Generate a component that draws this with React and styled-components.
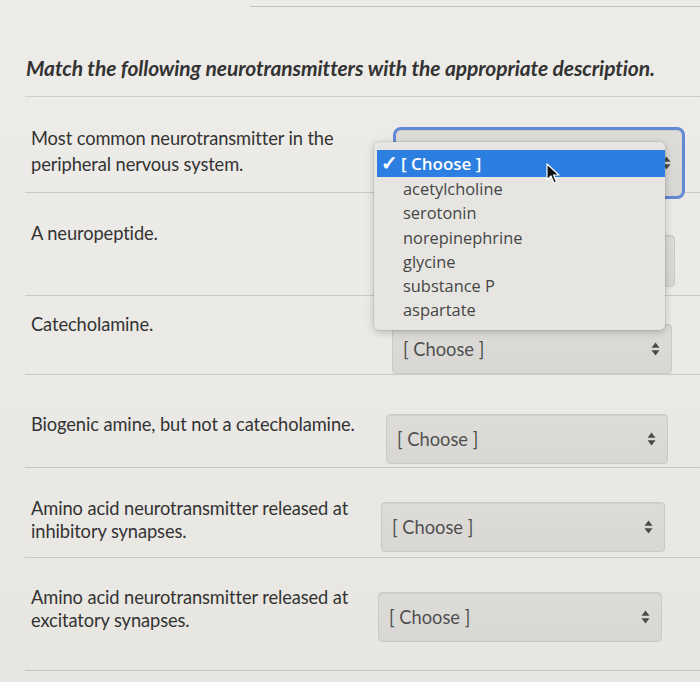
import React from 'react';
import styled, { createGlobalStyle } from 'styled-components';

const GlobalStyle = createGlobalStyle`
  html, body {
    margin: 0;
    padding: 0;
    background: #eceae6;
  }
  body {
    font-family: Lato, "Open Sans", sans-serif;
    color: #3a3a3a;
  }
`;

const Page = styled.div`
  position: relative;
  width: 700px;
  height: 682px;
  overflow: hidden;
  background: linear-gradient(180deg, #eeece8 0%, #ebe9e5 60%, #e8e6e1 100%);
`;

const TopRule = styled.div`
  height: 6px;
  margin-left: 250px;
  border-bottom: 1px solid #c2c0bc;
`;

const Title = styled.h2`
  margin: 0;
  padding: 48px 0 0 26px;
  height: 41px;
  font-size: 21px;
  font-weight: 700;
  font-style: italic;
  color: #333333;
  letter-spacing: -0.1px;
`;

const List = styled.div`
  margin-left: 25px;
  border-top: 1px solid #cfcdc9;
  border-bottom: 1px solid #c8c6c2;
`;

const Row = styled.div`
  display: flex;
  height: ${p => p.$h}px;
  box-sizing: border-box;
  & + & {
    border-top: 1px solid #cbc9c5;
  }
`;

const Label = styled.div`
  width: ${p => p.$left - 25}px;
  flex-shrink: 0;
  box-sizing: border-box;
  padding: ${p => p.$top}px 0 0 6px;
  font-size: 18.3px;
  line-height: ${p => p.$lh || 24}px;
  color: #333333;
  letter-spacing: -0.1px;
`;

const SelectWrap = styled.div`
  padding-top: ${p => p.$top}px;
`;

const Select = styled.div`
  display: flex;
  align-items: center;
  justify-content: space-between;
  box-sizing: border-box;
  width: ${p => p.$w}px;
  height: ${p => p.$hgt || 50}px;
  padding: 0 11px 0 10px;
  background: linear-gradient(180deg, #dedcd8, #d9d7d3);
  border: ${p => (p.$focus ? '3px solid #6289d4' : '1px solid #cbc9c5')};
  border-radius: ${p => (p.$focus ? 8 : 4)}px;
  box-shadow: inset 0 1px 1px rgba(0, 0, 0, 0.06);
  font-size: 18.3px;
  color: #505050;
`;

const Arrows = () => (
  <svg width="9" height="14" viewBox="0 0 9 14">
    <path d="M4.5 0.5 L8.5 5.8 H0.5 Z" fill="#4a4a4a" />
    <path d="M4.5 13.5 L8.5 8.2 H0.5 Z" fill="#4a4a4a" />
  </svg>
);

const Menu = styled.ul`
  position: absolute;
  left: 374px;
  top: 142px;
  width: 291px;
  height: 188px;
  box-sizing: border-box;
  margin: 0;
  padding: 6px 0 0 3px;
  list-style: none;
  background: #e7e5e1;
  border-radius: 5px;
  box-shadow: 0 2px 8px rgba(0, 0, 0, 0.22), 0 0 0 1px rgba(0, 0, 0, 0.06);
  font-family: "Open Sans", Lato, sans-serif;
`;

const Option = styled.li`
  height: ${p => (p.$active ? 27 : 24.3)}px;
  line-height: ${p => (p.$active ? 25 : 24.3)}px;
  padding-left: ${p => (p.$active ? 4 : 26)}px;
  margin-top: ${p => (p.$active ? 2 : 0)}px;
  font-size: ${p => (p.$active ? 17 : 16.4)}px;
  font-weight: ${p => (p.$active ? 600 : 400)};
  color: ${p => (p.$active ? '#ffffff' : '#454545')};
  background: ${p => (p.$active ? '#2c7fe0' : 'transparent')};
`;

const Check = styled.span`
  font-size: 20px;
  font-weight: 700;
  margin-right: 3px;
`;

const Cursor = styled.svg`
  position: absolute;
  left: 546px;
  top: 163px;
`;

const rows = [
  { h: 95, label: ['Most common neurotransmitter in the', 'peripheral nervous system.'], lt: 28, lh: 26, st: 30, left: 393, w: 292, sh: 72, focus: true },
  { h: 103, label: ['A neuropeptide.'], lt: 28, st: 42, left: 390, w: 285, sh: 52, hidden: true },
  { h: 79, label: ['Catecholamine.'], lt: 16, st: 28, left: 392, w: 280 },
  { h: 93, label: ['Biogenic amine, but not a catecholamine.'], lt: 37, st: 39, left: 386, w: 282 },
  { h: 90, label: ['Amino acid neurotransmitter released at', 'inhibitory synapses.'], lt: 29, lh: 23, st: 34, left: 381, w: 284 },
  { h: 113, label: ['Amino acid neurotransmitter released at', 'excitatory synapses.'], lt: 28, lh: 23, st: 34, left: 378, w: 284 },
];

const options = ['acetylcholine', 'serotonin', 'norepinephrine', 'glycine', 'substance P', 'aspartate'];

export default function App() {
  return (
    <Page>
      <GlobalStyle />
      <TopRule />
      <Title>Match the following neurotransmitters with the appropriate description.</Title>
      <List>
        {rows.map((r, i) => (
          <Row key={i} $h={r.h}>
            <Label $left={r.left} $top={r.lt} $lh={r.lh}>
              {r.label.map((t, j) => (
                <div key={j}>{t}</div>
              ))}
            </Label>
            <SelectWrap $top={r.st}>
              <Select $w={r.w} $hgt={r.sh} $focus={r.focus}>
                <span>{r.focus || r.hidden ? '' : '[ Choose ]'}</span>
                <Arrows />
              </Select>
            </SelectWrap>
          </Row>
        ))}
      </List>

      <Menu>
        <Option $active>
          <Check>✓</Check>[ Choose ]
        </Option>
        {options.map(o => (
          <Option key={o}>{o}</Option>
        ))}
      </Menu>

      <Cursor width="14" height="22" viewBox="0 0 14 22">
        <path d="M1 1 L1 17 L5 13 L8 20 L10.5 19 L7.5 12 L13 12 Z" fill="#111" stroke="#fff" strokeWidth="1.2" strokeLinejoin="round" />
      </Cursor>
    </Page>
  );
}
